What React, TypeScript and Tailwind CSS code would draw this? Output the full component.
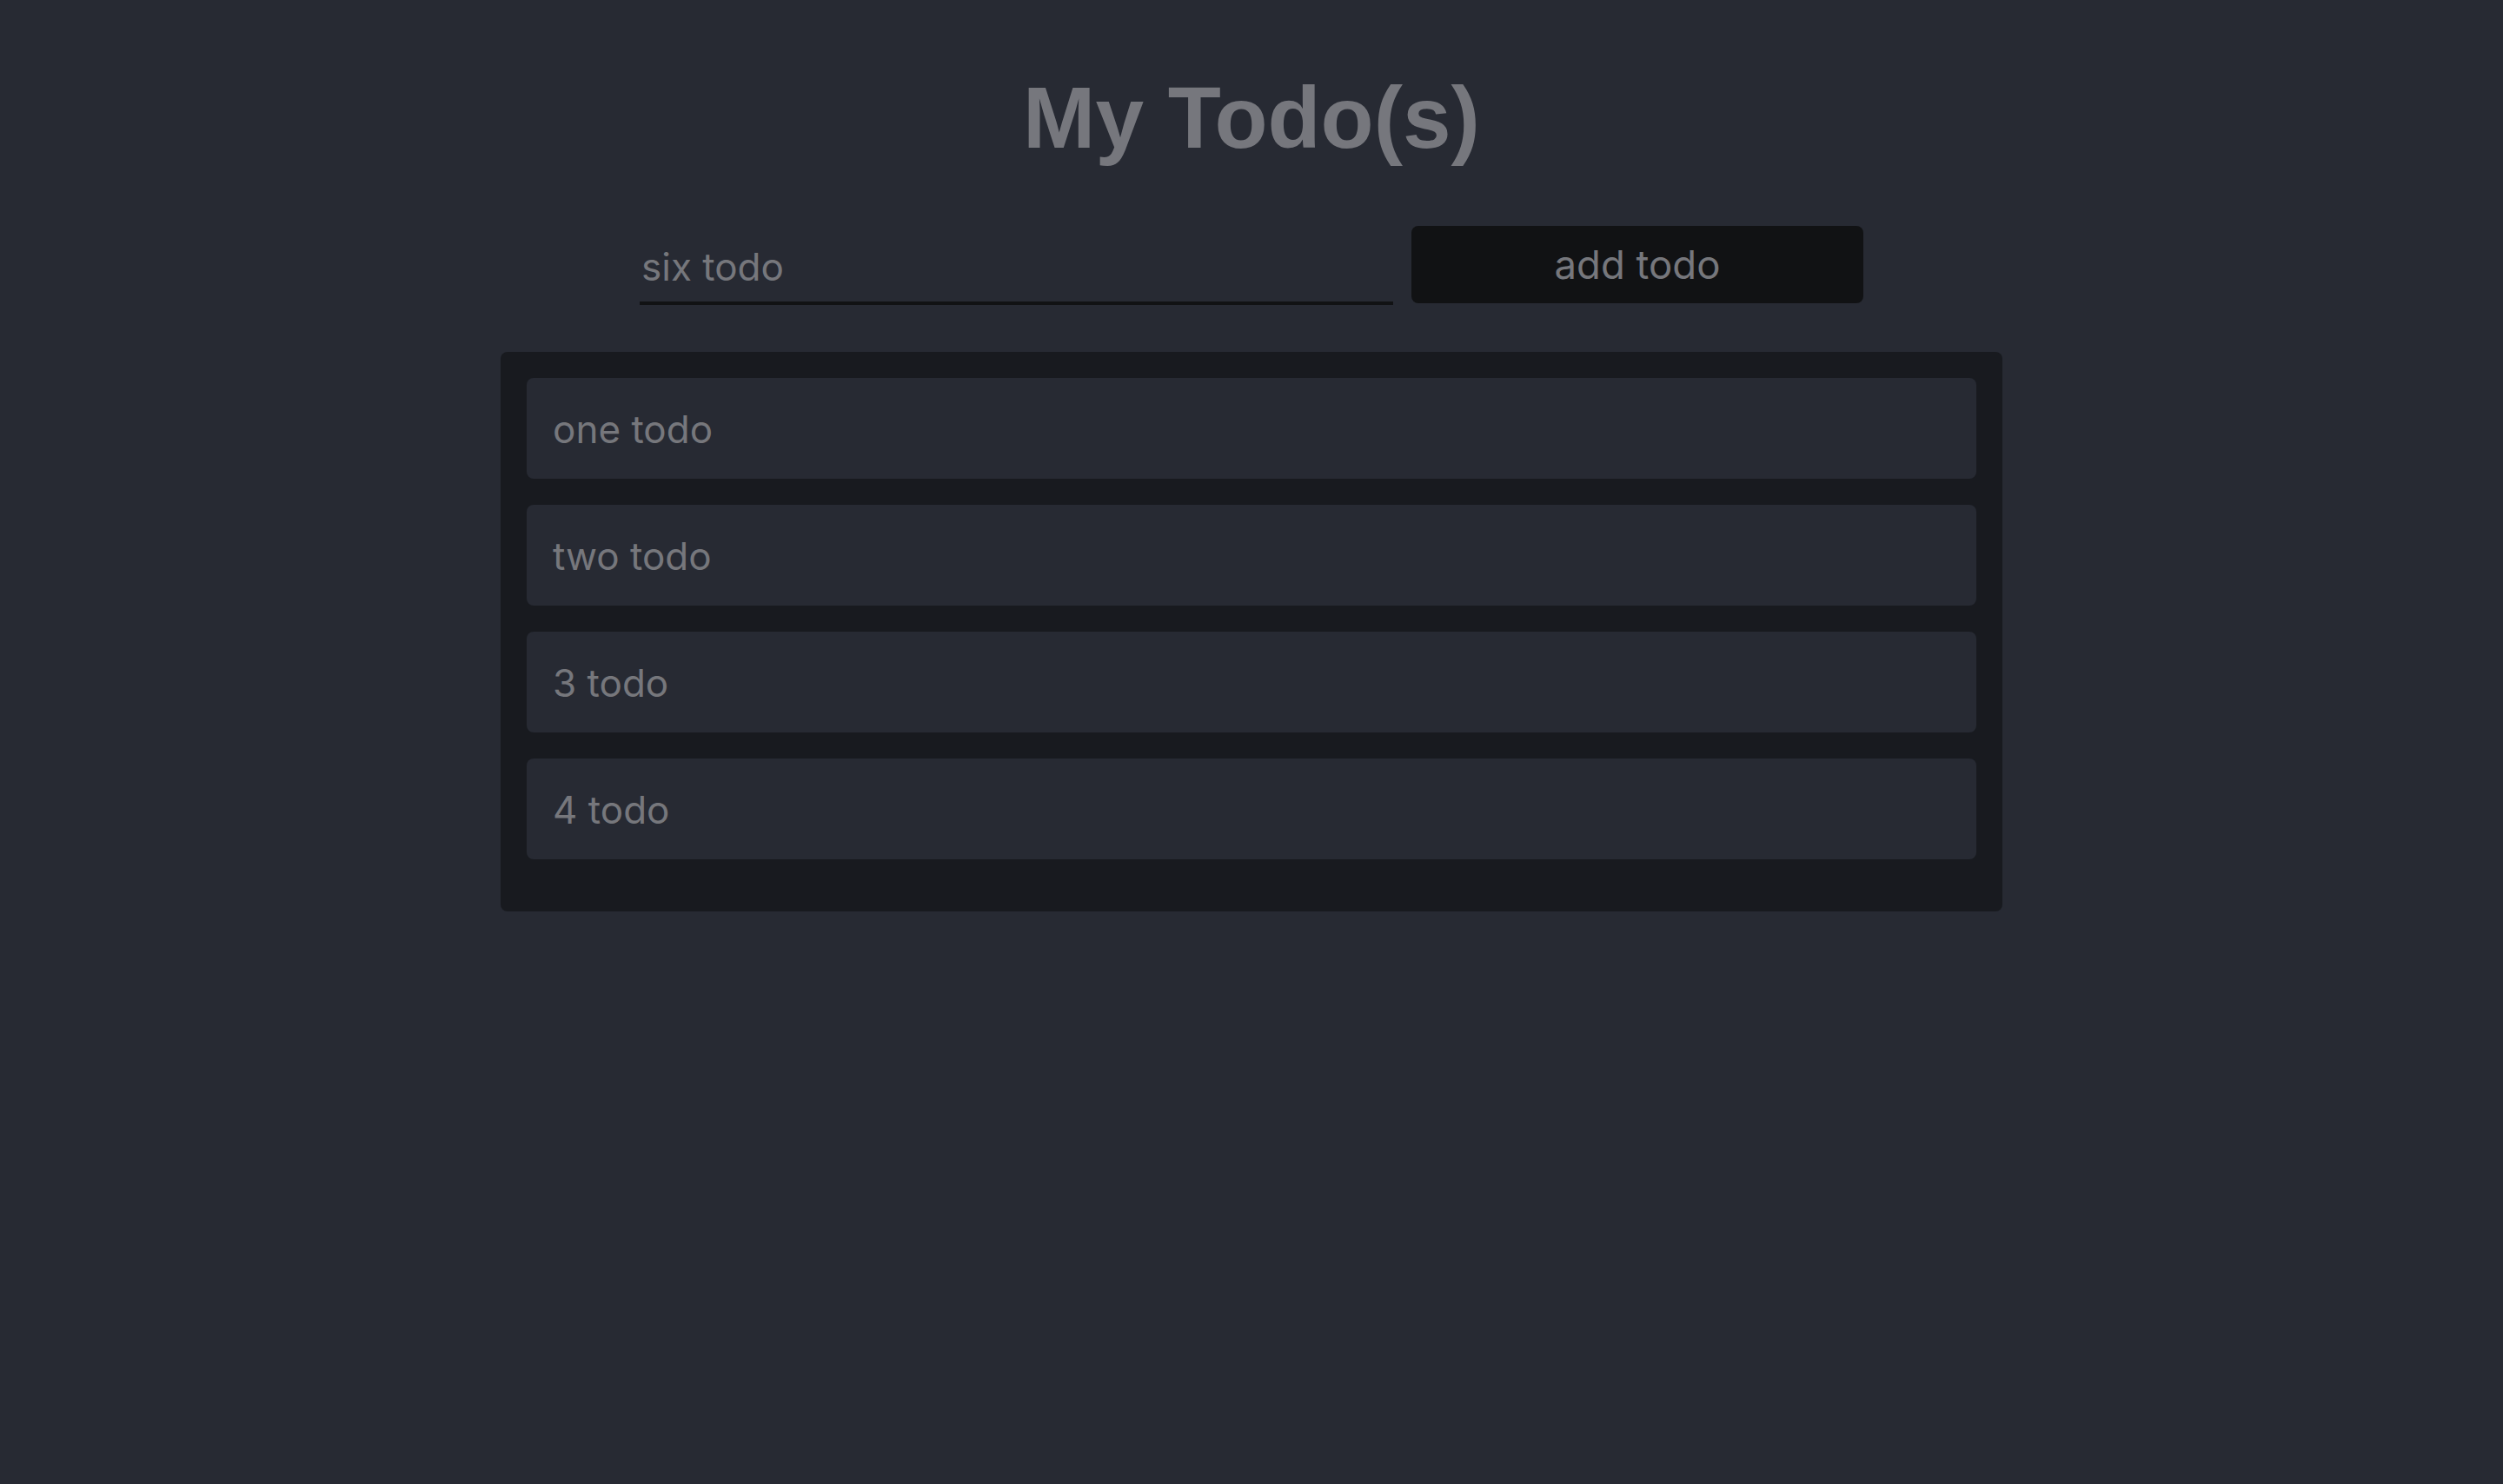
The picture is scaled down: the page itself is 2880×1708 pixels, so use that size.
import React from "react";

const todos = ["one todo", "two todo", "3 todo", "4 todo"];

export default function App() {
  return (
    <div
      className="min-h-screen w-full bg-[#272a33] flex flex-col items-center"
      style={{ fontFamily: "Inter, 'Liberation Sans', sans-serif" }}
    >
      <h1
        className="mt-[85px] text-[100px] leading-[100px] font-bold text-[#76777d]"
        style={{ fontFamily: "'Liberation Sans', Arial, sans-serif" }}
      >
        My Todo(s)
      </h1>
      <div className="mt-[75px] flex items-start gap-[21px] w-[1408px]">
        <input
          className="w-[867px] h-[91px] pt-[6px] px-[2px] bg-transparent border-b-[4px] border-[#111214] text-[44px] text-[#76777c] placeholder:text-[#76777c] outline-none"
          placeholder="six todo"
        />
        <button className="w-[520px] h-[89px] rounded-[8px] bg-[#111214] text-[45.5px] text-[#76777c] flex items-center justify-center pt-[2px]">
          add todo
        </button>
      </div>
      <div className="mt-[54px] w-[1728px] rounded-[8px] bg-[#181a1f] pt-[30px] px-[30px] pb-[60px] flex flex-col gap-[30px]">
        {todos.map((t) => (
          <div
            key={t}
            className="h-[116px] rounded-[8px] bg-[#272a33] flex items-center pl-[30px] pt-[2px] text-[44px] text-[#76777c]"
          >
            {t}
          </div>
        ))}
      </div>
    </div>
  );
}
